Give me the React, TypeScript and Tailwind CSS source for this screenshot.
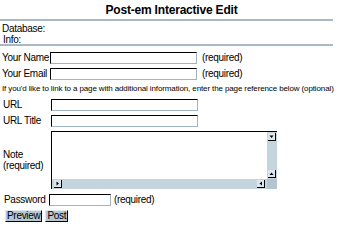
import React from "react";

const font = { fontFamily: '"Liberation Sans", Arial, sans-serif' };

function Field({ w }: { w: string }) {
  return (
    <div
      className={`${w} h-[12px] shrink-0 bg-white border-t border-l border-t-black border-l-black border-b border-r border-b-[#9fb4c4] border-r-[#9fb4c4]`}
    />
  );
}

function Arrow({ dir }: { dir: "up" | "down" | "left" | "right" }) {
  const pts =
    dir === "down"
      ? "1.5,2.5 5.5,2.5 3.5,5"
      : dir === "up"
      ? "1.5,5 5.5,5 3.5,2.5"
      : dir === "right"
      ? "2.5,1.5 2.5,5.5 5,3.5"
      : "5,1.5 5,5.5 2.5,3.5";
  return (
    <div className="w-[8px] h-[8px] bg-[#dce6ec] border-b border-r border-black flex items-center justify-center">
      <svg width="7" height="7" viewBox="0 0 7 7">
        <polygon points={pts} fill="#000" />
      </svg>
    </div>
  );
}

export default function App() {
  return (
    <div
      className="w-[343px] h-[225px] bg-white text-black text-[10px] tracking-[-0.3px] leading-none relative overflow-hidden whitespace-nowrap"
      style={font}
    >
      <div className="h-[19px] w-[343px] flex items-center justify-center font-bold text-[12px] tracking-[-0.2px] pt-[1px]">
        Post-em Interactive Edit
      </div>
      <div className="w-[333px] h-[2px] bg-[#a9b9c4]" />
      <div className="pl-[2px] pt-[3px] h-[23px] flex flex-col gap-[2px]">
        <div className="h-[9px] leading-[9px]">Database:</div>
        <div className="h-[9px] leading-[9px] pl-[1px]">Info:</div>
      </div>
      <div className="w-[333px] h-[2px] bg-[#a9b9c4]" />
      <div className="pt-[5px] flex flex-col">
        <div className="flex items-center h-[14px]">
          <div className="w-[50px] pl-[2px]">Your Name</div>
          <Field w="w-[147px]" />
          <div className="pl-[5px]">(required)</div>
        </div>
        <div className="flex items-center h-[14px] mt-[2px]">
          <div className="w-[50px] pl-[2px]">Your Email</div>
          <Field w="w-[147px]" />
          <div className="pl-[5px]">(required)</div>
        </div>
        <div className="h-[14px] pl-[2px] flex items-center text-[8px] tracking-[-0.12px] mt-[1px]">
          If you'd like to link to a page with additional information, enter the page reference below (optional)
        </div>
        <div className="flex items-center h-[14px] mt-[2px]">
          <div className="w-[51px] pl-[3px]">URL</div>
          <Field w="w-[147px]" />
        </div>
        <div className="flex items-center h-[14px] mt-[2px]">
          <div className="w-[51px] pl-[3px]">URL Title</div>
          <Field w="w-[147px]" />
        </div>
        <div className="flex items-center mt-[3px]">
          <div className="w-[51px] pl-[3px] leading-[11px]">
            Note
            <br />
            (required)
          </div>
          <div className="w-[226px] h-[58px] border-t border-l border-black flex flex-col">
            <div className="flex flex-1">
              <div className="flex-1 bg-white" />
              <div className="w-[10px] bg-[#c5d5dd] flex flex-col justify-between py-[1px] pl-[1px]">
                <Arrow dir="down" />
                <Arrow dir="up" />
              </div>
            </div>
            <div className="flex h-[10px]">
              <div className="flex-1 bg-[#c5d5dd] flex items-center justify-between px-[2px]">
                <Arrow dir="right" />
                <Arrow dir="left" />
              </div>
              <div className="w-[10px] bg-[#b3c6d0]" />
            </div>
          </div>
        </div>
        <div className="flex items-center h-[14px] mt-[4px]">
          <div className="w-[49px] pl-[4px]">Password</div>
          <Field w="w-[62px]" />
          <div className="pl-[3px]">(required)</div>
        </div>
        <div className="flex items-center gap-[3px] pl-[5px] mt-[3px]">
          <button
            className="h-[12px] px-[1px] bg-[#b5c7d3] border-b border-r border-black border-t border-l border-t-[#dfe8ee] border-l-[#dfe8ee] leading-none text-[10px] tracking-[-0.3px]"
            style={font}
          >
            Preview
          </button>
          <button
            className="h-[12px] px-[1px] bg-[#b5c7d3] border-b border-r border-black border-t border-l border-t-[#dfe8ee] border-l-[#dfe8ee] leading-none text-[10px] tracking-[-0.3px]"
            style={font}
          >
            Post
          </button>
        </div>
      </div>
    </div>
  );
}
